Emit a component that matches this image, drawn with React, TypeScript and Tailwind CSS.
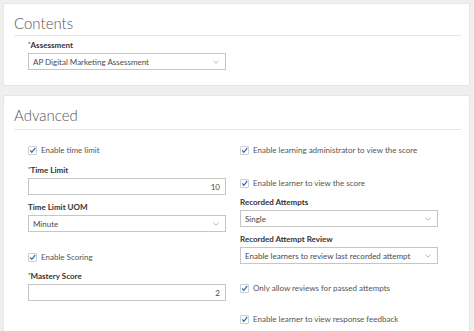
import React from "react";

const font = { fontFamily: 'Lato, "Open Sans", sans-serif' };

function Check({ label }: { label: string }) {
  return (
    <div className="flex items-center gap-[4px] h-[9px]">
      <div className="w-[9px] h-[9px] border border-[#cfcfcf] bg-white rounded-[1px] flex items-center justify-center shrink-0">
        <svg width="9" height="9" viewBox="0 0 9 9">
          <path d="M1.4 4.4 L3.6 6.8 L8 1.3" fill="none" stroke="#2f6fb8" strokeWidth="1.6" />
        </svg>
      </div>
      <span className="text-[8px] leading-[9px] text-[#555]">{label}</span>
    </div>
  );
}

function Label({ text, req }: { text: string; req?: boolean }) {
  return (
    <div className="text-[8px] font-bold text-[#333] h-[11px] leading-[11px] whitespace-nowrap">
      {req && <span className="text-[6px] relative top-[-2px]">*</span>}
      {text}
    </div>
  );
}

function Select({ value }: { value: string }) {
  return (
    <div className="h-[17px] w-[198px] border border-[#c6c6c6] bg-white flex items-center justify-between pl-[4px] pr-[6px]">
      <span className="text-[8px] text-[#4a4a4a]">{value}</span>
      <svg width="6" height="4" viewBox="0 0 6 4">
        <path d="M0.5 0.8 L3 3.2 L5.5 0.8" fill="none" stroke="#a0a0a0" strokeWidth="0.8" />
      </svg>
    </div>
  );
}

function Input({ value }: { value: string }) {
  return (
    <div className="h-[17px] w-[198px] border border-[#c6c6c6] bg-white flex items-center justify-end px-[5px]">
      <span className="text-[8px] text-[#4a4a4a]">{value}</span>
    </div>
  );
}

export default function App() {
  return (
    <div style={font} className="w-[474px] h-[331px] bg-[#f0efed] overflow-hidden pt-[3px] pl-[3px]">
      <div className="bg-white border border-[#e6e6e4] rounded-[2px] w-[467px] h-[83px] pl-[10px] pr-[8px]">
        <div className="text-[15px] font-light text-[#555] leading-[20px] pt-[9px] h-[31px]">Contents</div>
        <div className="border-t border-[#e6e6e6]" />
        <div className="pl-[14px] pt-[4px]">
          <Label text="Assessment" req />
          <div className="mt-[2px]">
            <Select value="AP Digital Marketing Assessment" />
          </div>
        </div>
      </div>
      <div className="bg-white border border-[#e6e6e4] rounded-[2px] w-[467px] mt-[9px] h-[260px] pl-[10px] pr-[8px]">
        <div className="text-[15px] font-light text-[#555] leading-[20px] pt-[9px] h-[33px]">Advanced</div>
        <div className="border-t border-[#e6e6e6]" />
        <div className="pl-[14px] pt-[16px] flex gap-[14px]">
          <div className="w-[198px] flex flex-col">
            <Check label="Enable time limit" />
            <div className="mt-[10px]"><Label text="Time Limit" req /></div>
            <div className="mt-[2px]"><Input value="10" /></div>
            <div className="mt-[7px]"><Label text="Time Limit UOM" /></div>
            <div className="mt-[2px]"><Select value="Minute" /></div>
            <div className="mt-[21px]"><Check label="Enable Scoring" /></div>
            <div className="mt-[9px]"><Label text="Mastery Score" req /></div>
            <div className="mt-[2px]"><Input value="2" /></div>
          </div>
          <div className="w-[198px] flex flex-col">
            <Check label="Enable learning administrator to view the score" />
            <div className="mt-[24px]"><Check label="Enable learner to view the score" /></div>
            <div className="mt-[9px]"><Label text="Recorded Attempts" /></div>
            <div className="mt-[2px]"><Select value="Single" /></div>
            <div className="mt-[7px]"><Label text="Recorded Attempt Review" /></div>
            <div className="mt-[2px]"><Select value="Enable learners to review last recorded attempt" /></div>
            <div className="mt-[20px]"><Check label="Only allow reviews for passed attempts" /></div>
            <div className="mt-[22px]"><Check label="Enable learner to view response feedback" /></div>
          </div>
        </div>
      </div>
    </div>
  );
}
